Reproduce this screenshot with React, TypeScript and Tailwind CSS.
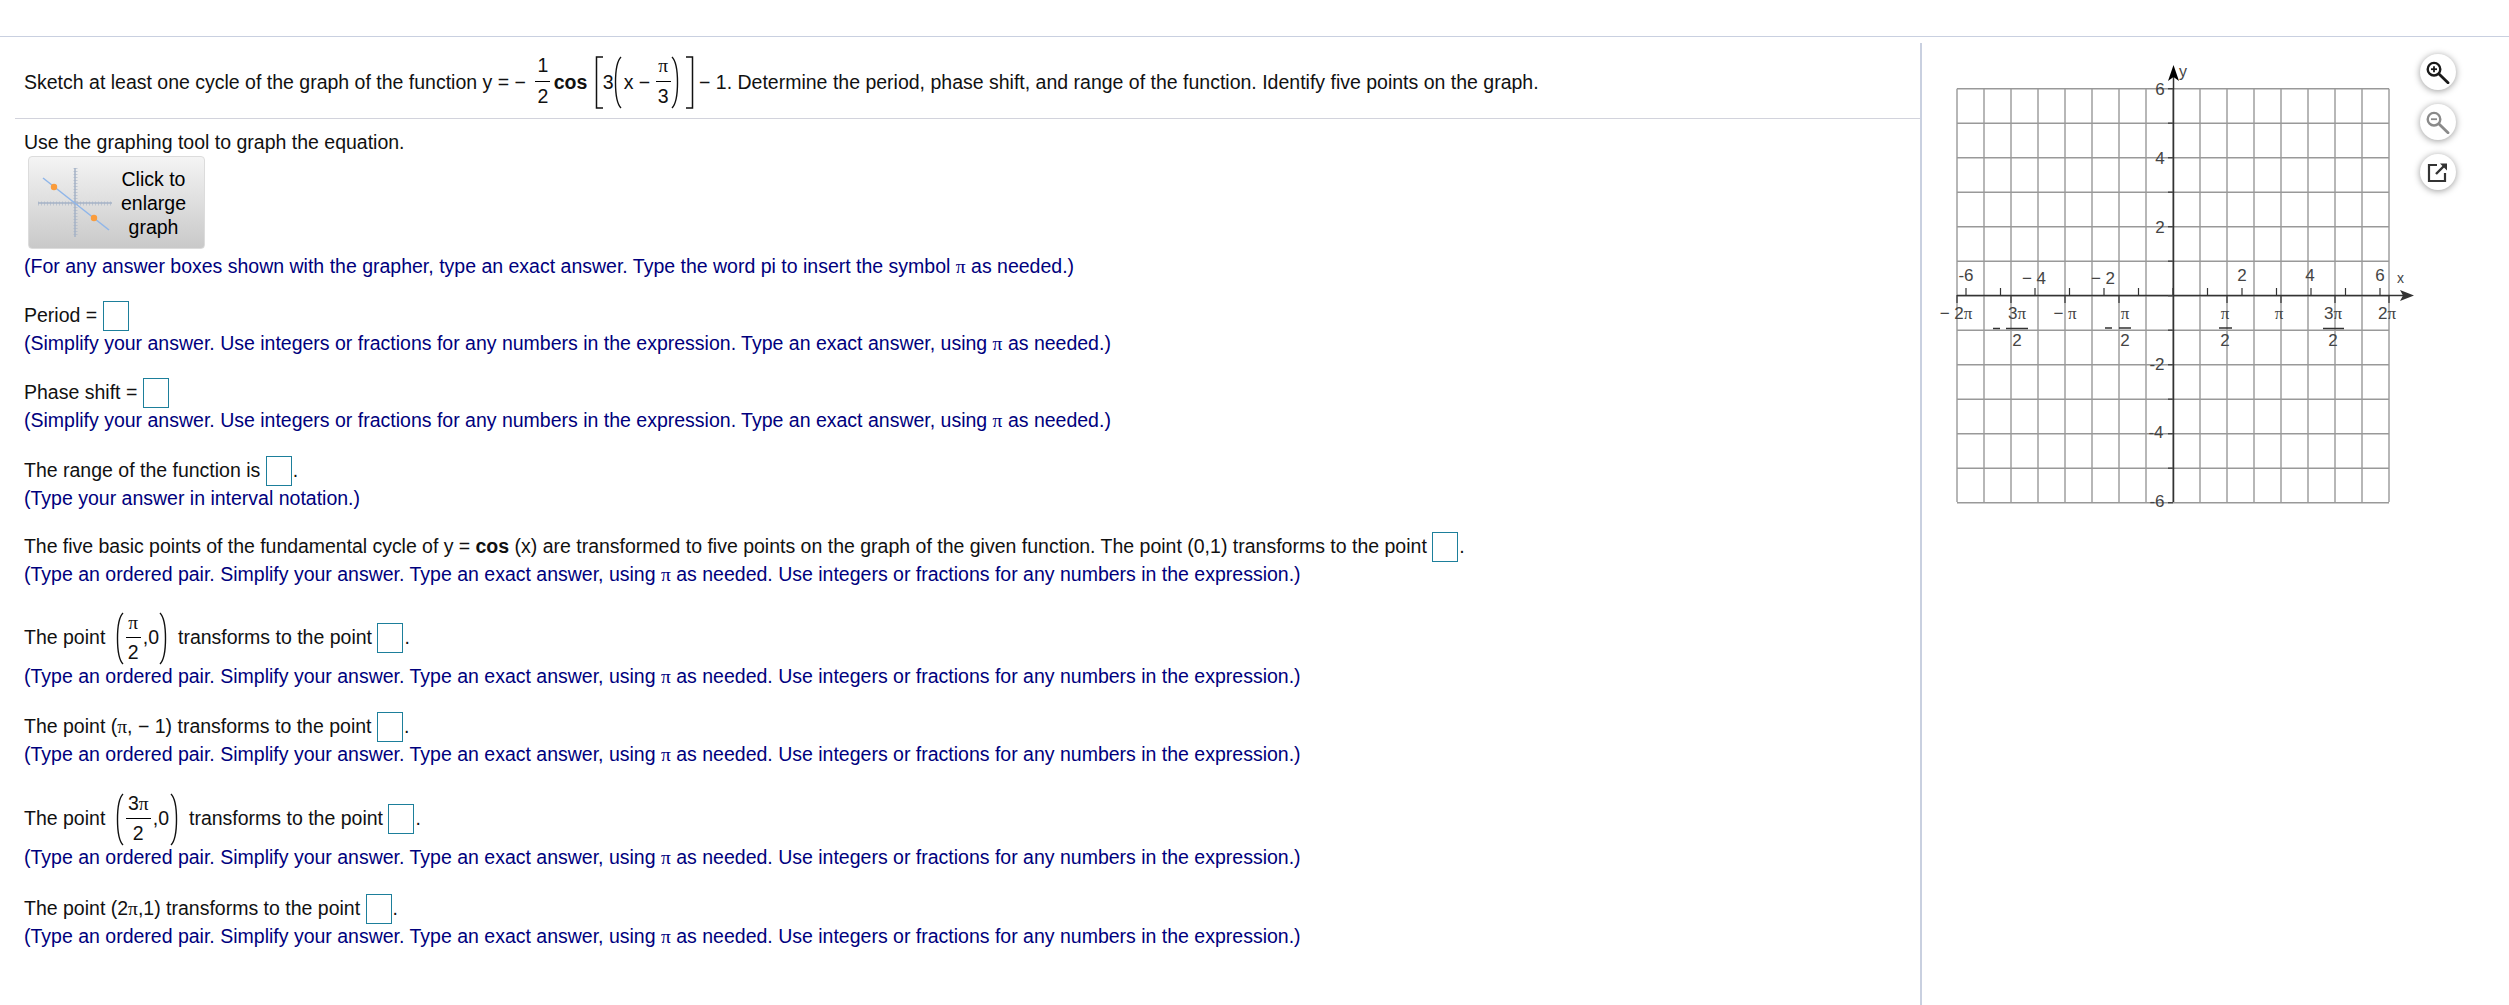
import React from 'react';

const FONT = 'font-["Liberation_Sans",Arial,sans-serif]';
const Pi = () => <span className='font-["Liberation_Serif",serif]'>π</span>;

const AnswerBox = () => (
  <span className="inline-block w-[26px] h-[30px] border border-[#1d7f9b] bg-white align-middle mr-[1px]" />
);

const Fraction = ({ top, bottom, width = 'w-[15px]', className = '', tall = false }: { top: React.ReactNode; bottom: React.ReactNode; width?: string; className?: string; tall?: boolean }) => (
  <span className={`inline-flex flex-col items-center text-center leading-[23px] shrink-0 -mt-[3px] ${width} ${className}`}>
    <span className={tall ? 'h-[28px] pt-[1px]' : 'h-[26px]'}>{top}</span>
    <span className={`w-full border-t border-black ${tall ? 'h-[28px] pt-[3px]' : 'h-[26px] pt-[3px]'}`}>{bottom}</span>
  </span>
);

const Paren = ({ right = false, height = 53 }: { right?: boolean; height?: number }) => (
  <svg width="8" height={height} viewBox={`0 0 8 ${height}`} className="shrink-0" fill="none" stroke="#111" strokeWidth="1.4">
    {right ? (
      <path d={`M1 1 C6 6 6.5 ${height / 3} 6.5 ${height / 2} C6.5 ${(height * 2) / 3} 6 ${height - 6} 1 ${height - 1}`} />
    ) : (
      <path d={`M7 1 C2 6 1.5 ${height / 3} 1.5 ${height / 2} C1.5 ${(height * 2) / 3} 2 ${height - 6} 7 ${height - 1}`} />
    )}
  </svg>
);

const Bracket = ({ right = false, className = '' }: { right?: boolean; className?: string }) => (
  <svg width="8" height="53" viewBox="0 0 8 53" className={`shrink-0 ${className}`} fill="none" stroke="#111" strokeWidth="1.5">
    {right ? <path d="M0 1 H6.5 V52 H0" /> : <path d="M8 1 H1.5 V52 H8" />}
  </svg>
);

const Hint = ({ children, className = '' }: { children: React.ReactNode; className?: string }) => (
  <p className={`text-[#00007d] h-[29px] leading-[29px] ${className}`}>{children}</p>
);

const Line = ({ children, className = '' }: { children: React.ReactNode; className?: string }) => (
  <div className={`flex items-center h-[29px] pt-[2px] whitespace-pre ${className}`}>{children}</div>
);

const PAIR_HINT = (
  <>
    (Type an ordered pair. Simplify your answer. Type an exact answer, using <Pi /> as needed. Use integers or fractions for any numbers in the expression.)
  </>
);
const SIMPLIFY_HINT = (
  <>
    (Simplify your answer. Use integers or fractions for any numbers in the expression. Type an exact answer, using <Pi /> as needed.)
  </>
);

const EnlargeButton = () => (
  <button className="flex items-center w-[177px] h-[93px] ml-[4px] rounded-[4px] border border-[#dcdcdc] bg-gradient-to-b from-[#f4f4f4] to-[#c9c9c9] text-black">
    <svg width="84" height="91" viewBox="0 0 84 91" className="shrink-0" fill="none">
      <path d="M9 46 H83" stroke="#a5b2c6" strokeWidth="1.5" />
      <path d="M9 46.5 H83" stroke="#a5b2c6" strokeWidth="4" strokeDasharray="1 2" opacity="0.6" />
      <path d="M46 11 V80" stroke="#a5b2c6" strokeWidth="1.5" />
      <path d="M46.5 11 V80" stroke="#a5b2c6" strokeWidth="4" strokeDasharray="1 2" opacity="0.6" />
      <path d="M14 21 L80 73" stroke="#8fb6ea" strokeWidth="1.5" />
      <circle cx="25" cy="30" r="3.2" fill="#fa9c3c" />
      <circle cx="65" cy="61" r="3.2" fill="#fa9c3c" />
    </svg>
    <span className="flex-1 text-center leading-[24px] pr-[10px]">Click to enlarge graph</span>
  </button>
);

const xGrid = Array.from({ length: 17 }, (_, i) => 1957 + i * 27);
const yGrid = Array.from({ length: 13 }, (_, i) => 88.7 + i * 34.5);
const upperTicks = Array.from({ length: 13 }, (_, i) => 1966 + i * 34.5);
const lowerTicks = [1957, 2011, 2065, 2119, 2227, 2281, 2335, 2389];
const labelFill = '#444';

const GraphLabel = ({ x, y, children, italicFree = false }: { x: number; y: number; children: React.ReactNode; italicFree?: boolean }) => (
  <text x={x} y={y} textAnchor="middle" fontSize="17" fill={labelFill} fontFamily={italicFree ? 'Liberation Serif, serif' : 'Liberation Sans, Arial, sans-serif'}>
    {children}
  </text>
);

const Graph = () => (
  <svg width="490" height="470" viewBox="1930 50 490 470" className="shrink-0">
    {xGrid.map(x => (
      <line key={x} x1={x} x2={x} y1="88.7" y2="502" stroke="#999" strokeWidth="1.4" />
    ))}
    {yGrid.map(y => (
      <line key={y} x1="1957" x2="2389" y1={y} y2={y} stroke="#999" strokeWidth="1.4" />
    ))}
    <line x1="2173.5" x2="2173.5" y1="72" y2="502" stroke="#333" strokeWidth="1.5" />
    <path d="M2173.5 65 L2168 81 L2173.5 77 L2179 81 Z" fill="#000" />
    <line x1="1957" x2="2407" y1="295.5" y2="295.5" stroke="#333" strokeWidth="1.3" />
    <path d="M2414 295.5 L2400 290 L2403 295.5 L2400 301 Z" fill="#333" />
    {yGrid.map(y => (
      <line key={y} x1="2168" x2="2173" y1={y} y2={y} stroke="#444" strokeWidth="1.4" />
    ))}
    {upperTicks.map(x => (
      <line key={x} x1={x} x2={x} y1="288" y2="295" stroke="#333" strokeWidth="1.2" />
    ))}
    {lowerTicks.map(x => (
      <line key={x} x1={x} x2={x} y1="295" y2="303" stroke="#333" strokeWidth="1.2" />
    ))}

    <text x="2179" y="77" fontSize="16" fill={labelFill} fontFamily="Liberation Sans, Arial, sans-serif">y</text>
    <GraphLabel x={2160} y={95}>6</GraphLabel>
    <GraphLabel x={2160} y={164}>4</GraphLabel>
    <GraphLabel x={2160} y={233}>2</GraphLabel>
    <GraphLabel x={2157} y={370}>-2</GraphLabel>
    <GraphLabel x={2156} y={438}>-4</GraphLabel>
    <GraphLabel x={2157} y={507}>-6</GraphLabel>

    <GraphLabel x={1966} y={281}>-6</GraphLabel>
    <GraphLabel x={2034} y={284}>− 4</GraphLabel>
    <GraphLabel x={2103} y={284}>− 2</GraphLabel>
    <GraphLabel x={2242} y={281}>2</GraphLabel>
    <GraphLabel x={2310} y={281}>4</GraphLabel>
    <GraphLabel x={2380} y={281}>6</GraphLabel>
    <text x="2397" y="283" fontSize="14" fill={labelFill} fontFamily="Liberation Sans, Arial, sans-serif">x</text>

    <text x="1956" y="319" textAnchor="middle" fontSize="17" fill={labelFill} fontFamily="Liberation Sans, Arial, sans-serif">− 2<tspan fontFamily="Liberation Serif, serif">π</tspan></text>
    <text x="2017" y="319" textAnchor="middle" fontSize="17" fill={labelFill} fontFamily="Liberation Sans, Arial, sans-serif">3<tspan fontFamily="Liberation Serif, serif">π</tspan></text>
    <text x="2065" y="319" textAnchor="middle" fontSize="17" fill={labelFill} fontFamily="Liberation Sans, Arial, sans-serif">− <tspan fontFamily="Liberation Serif, serif">π</tspan></text>
    <GraphLabel x={2125} y={319} italicFree>π</GraphLabel>
    <GraphLabel x={2225} y={319} italicFree>π</GraphLabel>
    <GraphLabel x={2279} y={319} italicFree>π</GraphLabel>
    <text x="2333" y="319" textAnchor="middle" fontSize="17" fill={labelFill} fontFamily="Liberation Sans, Arial, sans-serif">3<tspan fontFamily="Liberation Serif, serif">π</tspan></text>
    <text x="2387" y="319" textAnchor="middle" fontSize="17" fill={labelFill} fontFamily="Liberation Sans, Arial, sans-serif">2<tspan fontFamily="Liberation Serif, serif">π</tspan></text>

    {/* fraction bars under the axis labels */}
    <path d="M1993 328.5 H2000 M2006 328.5 H2028 M2105 328 H2112 M2119 328 H2131 M2219 328 H2232 M2323 328.5 H2344" stroke="#333" strokeWidth="1.3" />
    <GraphLabel x={2017} y={346}>2</GraphLabel>
    <GraphLabel x={2125} y={346}>2</GraphLabel>
    <GraphLabel x={2225} y={346}>2</GraphLabel>
    <GraphLabel x={2333} y={346}>2</GraphLabel>
  </svg>
);

const CircleButton = ({ children }: { children: React.ReactNode }) => (
  <button className="flex items-center justify-center w-[36px] h-[36px] rounded-full bg-white shadow-[0_1px_7px_rgba(0,0,0,0.4)]">
    {children}
  </button>
);

const MagnifierIcon = ({ color, plus = false }: { color: string; plus?: boolean }) => (
  <svg width="24" height="24" viewBox="0 0 24 24" fill="none" stroke={color}>
    <circle cx="8" cy="9.2" r="6.3" strokeWidth="2.4" />
    <path d="M13 14 L22 22.7" strokeWidth="2.8" strokeLinecap="round" />
    <path d="M5 9.2 H11" strokeWidth="1.8" />
    {plus && <path d="M8 6.2 V12.2" strokeWidth="1.8" />}
  </svg>
);

const PopoutIcon = () => (
  <svg width="22" height="22" viewBox="0 0 22 22" fill="none" stroke="#333">
    <path d="M10 4 H2 V20 H18 V12" strokeWidth="2.2" />
    <path d="M9 13 L18 4" strokeWidth="2.4" />
    <path d="M13 2.5 H20 V9.5 Z" fill="#333" stroke="none" />
  </svg>
);

export default function App() {
  return (
    <div className={`min-h-screen bg-white text-[#111] text-[19.5px] overflow-hidden ${FONT}`}>
      <div className="h-[37px] border-b border-[#c9d0e0]" />
      <div className="flex">
        {/* question column */}
        <div className="w-[1922px] h-[962px] mt-[6px] border-r-2 border-[#c9d0e0] shrink-0">
          <div className="ml-[15px] h-[76px] pt-[4px] pl-[9px] flex items-center border-b border-[#d2d3dc] whitespace-pre">
            <span>Sketch at least one cycle of the graph of the function y = − </span>
            <Fraction tall top="1" bottom="2" className="ml-[4px]" />
            <span className="font-bold -ml-[2px]"> cos </span>
            <Bracket className="ml-[2px]" />
            <span>3</span>
            <Paren />
            <span className="ml-[2px]">x − </span>
            <Fraction tall top={<Pi />} bottom="3" />
            <Paren right />
            <Bracket right className="ml-[7px]" />
            <span> − 1. Determine the period, phase shift, and range of the function. Identify five points on the graph.</span>
          </div>

          <div className="pl-[24px]">
            <Line className="mt-[8px]">Use the graphing tool to graph the equation.</Line>
            <EnlargeButton />
            <Hint className="mt-[3px]">
              (For any answer boxes shown with the grapher, type an exact answer. Type the word pi to insert the symbol <Pi /> as needed.)
            </Hint>

            <Line className="mt-[19px]">Period = <AnswerBox /></Line>
            <Hint>{SIMPLIFY_HINT}</Hint>

            <Line className="mt-[19px]">Phase shift = <AnswerBox /></Line>
            <Hint>{SIMPLIFY_HINT}</Hint>

            <Line className="mt-[20px]">The range of the function is <AnswerBox />.</Line>
            <Hint>(Type your answer in interval notation.)</Hint>

            <Line className="mt-[18px]">
              <span className="tracking-[-0.04px]">The five basic points of the fundamental cycle of y = </span><b>cos</b> (x) are transformed to five points on the graph of the given function. The point (0,1) transforms to the point <AnswerBox />.
            </Line>
            <Hint>{PAIR_HINT}</Hint>

            <Line className="mt-[23px] h-[50px]">
              The point <span className="w-[5px]" /><Paren /><span className="w-[2px]" /><Fraction top={<Pi />} bottom="2" className="mr-[2px]" />,0<Paren right /><span className="w-[11px]" />transforms to the point <AnswerBox />.
            </Line>
            <Hint>{PAIR_HINT}</Hint>

            <Line className="mt-[20px]">
              The point (<Pi />, − 1) transforms to the point <AnswerBox />.
            </Line>
            <Hint>{PAIR_HINT}</Hint>

            <Line className="mt-[24px] h-[50px]">
              The point <span className="w-[5px]" /><Paren /><span className="w-[2px]" /><Fraction top={<>3<Pi /></>} bottom="2" width="w-[25px]" className="mr-[2px]" />,0<span className="w-[1px]" /><Paren right /><span className="w-[11px]" />transforms to the point <AnswerBox />.
            </Line>
            <Hint>{PAIR_HINT}</Hint>

            <Line className="mt-[21px]">
              The point (2<Pi />,1) transforms to the point <AnswerBox />.
            </Line>
            <Hint>{PAIR_HINT}</Hint>
          </div>
        </div>

        {/* graph column */}
        <div className="flex items-start pl-[8px] pt-[13px]">
          <Graph />
          <div className="flex flex-col gap-[14px] pt-[4px]">
            <CircleButton><MagnifierIcon color="#1a1a1a" plus /></CircleButton>
            <CircleButton><MagnifierIcon color="#8a8a8a" /></CircleButton>
            <CircleButton><PopoutIcon /></CircleButton>
          </div>
        </div>
      </div>
    </div>
  );
}
